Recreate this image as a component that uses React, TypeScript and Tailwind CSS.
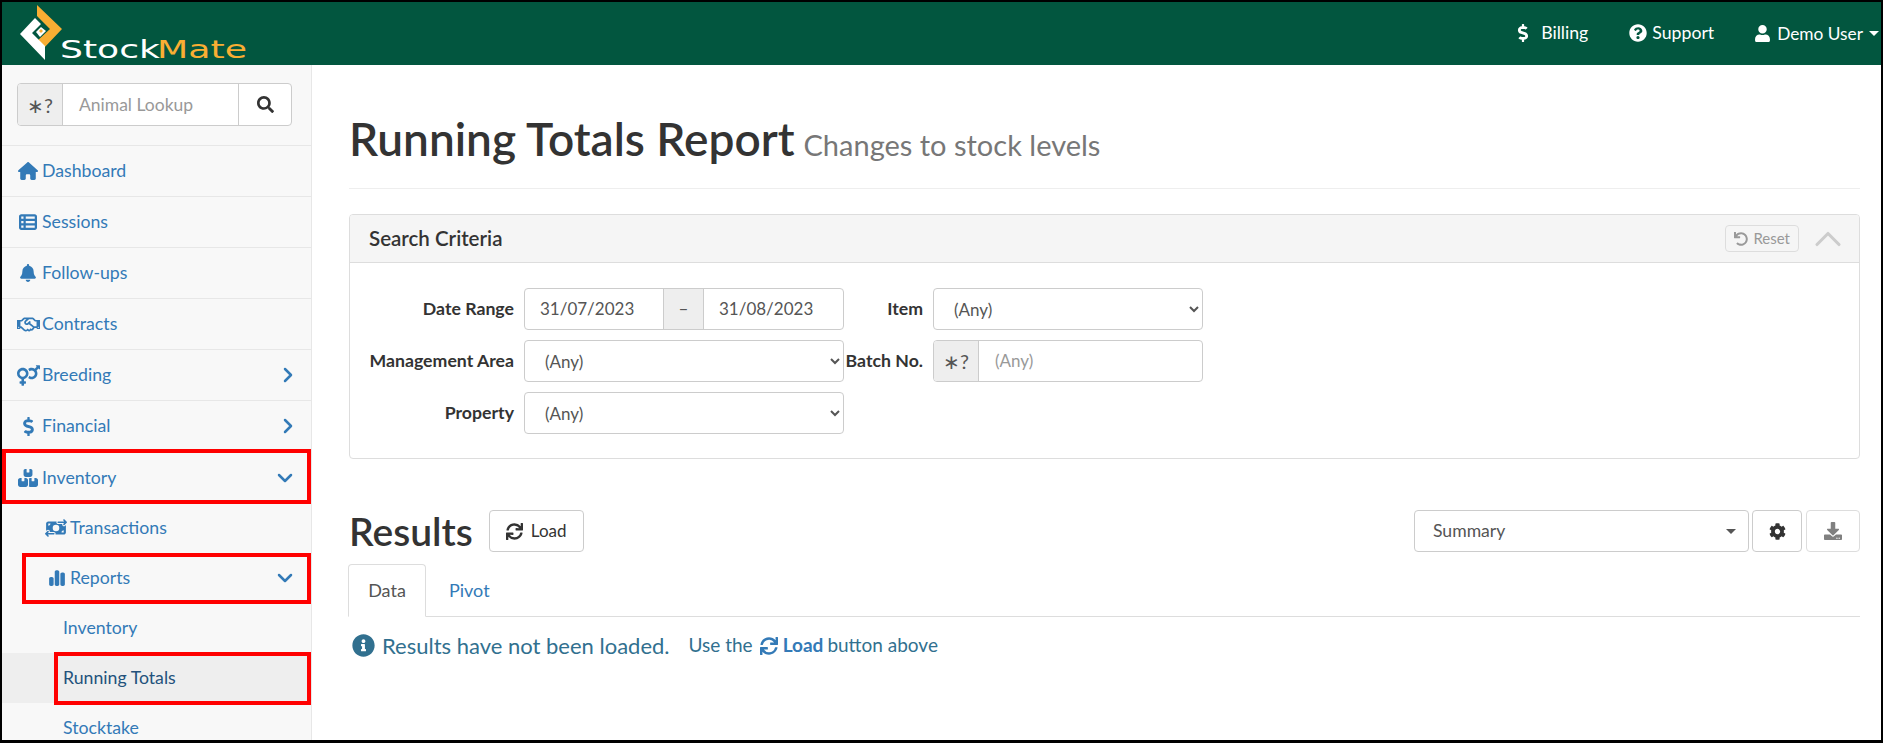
import { ReactNode } from 'react'
import {
  FaBell, FaRegHandshake, FaVenusMars, FaDollarSign, FaSearch,
  FaQuestionCircle, FaUser, FaUndo, FaSync, FaCog, FaDownload, FaInfoCircle,
} from 'react-icons/fa'
import { FaHouse, FaTableList, FaBoxesStacked, FaMoneyBillTransfer, FaChartSimple } from 'react-icons/fa6'
import { ChevronRight, ChevronDown, ChevronUp } from 'lucide-react'

const font = { fontFamily: 'Lato, "Open Sans", sans-serif' }

function Logo() {
  return (
    <svg width="250" height="63" viewBox="0 0 250 63" className="shrink-0">
      <polygon points="35,3 60,27 41,47 34,40 48,27 35,14" fill="#f9ae33" />
      <polygon points="18,32 33,16 39,22 30,31 43,44 43,58" fill="#ffffff" />
      <polygon points="34,30 39,25 44,29 38,35" fill="#ffffff" />
      <polygon points="37,29 39,27 41,29 39,31" fill="#f9ae33" />
      <text x="58" y="56" textLength="100" lengthAdjust="spacingAndGlyphs" fontFamily="DejaVu Sans" fontSize="25" fill="#ffffff">Stock</text>
      <text x="155" y="56" textLength="90" lengthAdjust="spacingAndGlyphs" fontFamily="DejaVu Sans" fontSize="25" fill="#f9ae33">Mate</text>
    </svg>
  )
}

function Addon({ className }: { className: string }) {
  return (
    <div className={`flex items-center justify-center bg-[#eeeeee] text-[#555555] text-[20px] ${className}`}>
      ∗?
    </div>
  )
}

function NavRow({ icon, label, right }: { icon: ReactNode; label: string; right?: ReactNode }) {
  return (
    <div className="flex items-center h-[51px] border-b border-[#e7e7e7] pl-[15px] pr-[11px] text-[#337ab7]">
      <span className="w-[26px] flex justify-center shrink-0 -ml-[2px] mr-[1px]">{icon}</span>
      <span className="flex-1">{label}</span>
      {right}
    </div>
  )
}

function RedBox({ className }: { className: string }) {
  return <div className={`absolute border-[4px] border-[#ff0000] ${className}`} />
}

function Sidebar() {
  return (
    <aside className="w-[310px] shrink-0 bg-[#f8f8f8] border-r border-[#e7e7e7] text-[17.7px]">
      <div className="h-[81px] border-b border-[#e7e7e7] pl-[15px] pt-[18px]">
        <div className="flex w-[275px] h-[43px] rounded border border-[#cccccc] overflow-hidden bg-white">
          <Addon className="w-[45px] border-r border-[#cccccc]" />
          <div className="flex items-center flex-1 pl-[16px] pt-[1px] text-[#999999] text-[17.5px]">Animal Lookup</div>
          <div className="flex items-center justify-center w-[53px] border-l border-[#cccccc] text-[#333333]">
            <FaSearch size={17} />
          </div>
        </div>
      </div>
      <NavRow icon={<FaHouse size={20} />} label="Dashboard" />
      <NavRow icon={<FaTableList size={18} />} label="Sessions" />
      <NavRow icon={<FaBell size={18} />} label="Follow-ups" />
      <NavRow icon={<FaRegHandshake size={23} />} label="Contracts" />
      <NavRow icon={<FaVenusMars size={23} />} label="Breeding" right={<ChevronRight size={24} strokeWidth={2.5} />} />
      <NavRow icon={<FaDollarSign size={19} />} label="Financial" right={<ChevronRight size={24} strokeWidth={2.5} />} />
      <div className="relative">
        <div className="flex items-center h-[51px] pl-[15px] pr-[14px] pt-[1px] text-[#337ab7]">
          <span className="w-[26px] flex justify-center shrink-0 -ml-[2px] mr-[1px]"><FaBoxesStacked size={20} /></span>
          <span className="flex-1">Inventory</span>
          <ChevronDown size={24} strokeWidth={2.5} />
        </div>
        <RedBox className="top-[-3px] bottom-[-1px] left-0 right-0" />
      </div>
      <div className="flex items-center h-[50px] pl-[43px] text-[#337ab7]">
        <FaMoneyBillTransfer size={22} className="mr-[3px]" />
        <span>Transactions</span>
      </div>
      <div className="relative flex items-center h-[50px] pl-[46px] pr-[14px] text-[#337ab7]">
        <FaChartSimple size={18} className="mr-[4px]" />
        <span className="flex-1">Reports</span>
        <ChevronDown size={24} strokeWidth={2.5} />
        <RedBox className="top-0 bottom-[-1px] left-[20px] right-0" />
      </div>
      <div className="flex items-center h-[50px] pl-[61px] text-[#337ab7]">Inventory</div>
      <div className="relative flex items-center h-[50px] pl-[61px] bg-[#eeeeee] text-[#23527c]">
        Running Totals
        <RedBox className="top-[-1px] bottom-[-2px] left-[52px] right-0" />
      </div>
      <div className="flex items-center h-[50px] pl-[61px] text-[#337ab7]">Stocktake</div>
    </aside>
  )
}

function Field({ label, children }: { label: string; children: ReactNode }) {
  return (
    <>
      <label className="font-bold text-[#333333] text-[17.7px] text-right whitespace-nowrap self-center pr-[10px]">{label}</label>
      {children}
    </>
  )
}

function Select({ className = '' }: { className?: string }) {
  return (
    <select className={`w-full h-[42px] rounded border border-[#cccccc] bg-white pl-[16px] pr-[10px] text-[#555555] text-[17px] ${className}`}>
      <option>(Any)</option>
    </select>
  )
}

function SearchPanel() {
  return (
    <section className="border border-[#dddddd] rounded overflow-hidden mt-[25px]">
      <div className="flex items-center h-[48px] bg-[#f5f5f5] border-b border-[#dddddd] pl-[19px] pr-[19px]">
        <h3 className="flex-1 text-[20.5px] font-semibold text-[#333333]">Search Criteria</h3>
        <div className="flex items-center gap-[5px] h-[27px] px-[8px] border border-[#dddddd] rounded text-[#999999] text-[15px]">
          <FaUndo size={14} /> Reset
        </div>
        <ChevronUp size={44} strokeWidth={1.7} className="text-[#cccccc] ml-[7px] -mr-[10px]" />
      </div>
      <div className="grid grid-cols-[174px_320px_89px_270px] gap-y-[10px] pt-[25px] pb-[24px]">
        <Field label="Date Range">
          <div className="flex h-[42px] rounded border border-[#cccccc] overflow-hidden text-[#555555] text-[17px]">
            <div className="flex items-center w-[138px] pl-[15px]">31/07/2023</div>
            <div className="flex items-center justify-center w-[41px] bg-[#eeeeee] border-x border-[#cccccc]">–</div>
            <div className="flex items-center flex-1 pl-[15px]">31/08/2023</div>
          </div>
        </Field>
        <Field label="Item"><Select /></Field>
        <Field label="Management Area"><Select /></Field>
        <Field label="Batch No.">
          <div className="flex h-[42px] rounded border border-[#cccccc] overflow-hidden">
            <Addon className="w-[45px] border-r border-[#cccccc]" />
            <div className="flex items-center flex-1 pl-[16px] text-[#999999] text-[17px]">(Any)</div>
          </div>
        </Field>
        <Field label="Property"><Select /></Field>
      </div>
    </section>
  )
}

function ResultsSection() {
  return (
    <section className="mt-[51px]">
      <div className="flex items-center h-[42px]">
        <h2 className="text-[39px] font-semibold text-[#333333] leading-none mr-[16px]">Results</h2>
        <button className="flex items-center gap-[8px] h-[42px] px-[16px] border border-[#cccccc] rounded text-[#333333] text-[17px]">
          <FaSync size={17} /> Load
        </button>
        <div className="flex-1" />
        <div className="flex items-center w-[335px] h-[42px] pl-[18px] pr-[12px] border border-[#cccccc] rounded text-[#555555] text-[17.6px]">
          <span className="flex-1">Summary</span>
          <span className="w-0 h-0 border-x-[5px] border-t-[5px] border-x-transparent border-t-[#555555]" />
        </div>
        <button className="flex items-center justify-center w-[50px] h-[42px] ml-[3px] border border-[#cccccc] rounded text-[#333333]">
          <FaCog size={17} />
        </button>
        <button className="flex items-center justify-center w-[54px] h-[42px] ml-[4px] border border-[#dddddd] rounded text-[#808080]">
          <FaDownload size={18} />
        </button>
      </div>
      <div className="flex h-[53px] mt-[12px] border-b border-[#dddddd] text-[18px]">
        <div className="flex items-center justify-center w-[78px] -ml-px border border-[#dddddd] border-b-white rounded-t h-[53px] bg-white text-[#555555]">Data</div>
        <div className="flex items-center pl-[23px] text-[#337ab7]">Pivot</div>
      </div>
      <div className="flex items-center mt-[12px] text-[#31708f]">
        <FaInfoCircle size={23} className="ml-[3px] mr-[7px]" />
        <span className="text-[22px] mr-[19px]">Results have not been loaded.</span>
        <span className="text-[19px]">Use the</span>
        <FaSync size={18} className="text-[#337ab7] ml-[7px] mr-[5px]" />
        <span className="text-[19px] font-bold text-[#337ab7]">Load</span>
        <span className="text-[19px] ml-[4px] text-[#31708f]">button above</span>
      </div>
    </section>
  )
}

export default function App() {
  return (
    <div style={font} className="w-[1883px] h-[743px] border-2 border-b-[3px] border-black overflow-hidden flex flex-col bg-white">
      <header className="flex items-center h-[63px] bg-[#02563f] text-white text-[17.7px] shrink-0">
        <Logo />
        <div className="flex-1" />
        <div className="flex items-center gap-[9px]"><FaDollarSign size={18} /> Billing</div>
        <div className="flex items-center gap-[5px] ml-[41px]"><FaQuestionCircle size={18} /> Support</div>
        <div className="flex items-center gap-[6px] ml-[40px] mr-[2px] text-[17.3px]">
          <FaUser size={17} /> Demo User
          <span className="w-0 h-0 border-x-[5px] border-t-[5px] border-x-transparent border-t-white" />
        </div>
      </header>
      <div className="flex flex-1 min-h-0">
        <Sidebar />
        <main className="flex-1 pl-[37px] pr-[21px]">
          <div className="h-[124px] border-b border-[#eeeeee] flex items-baseline pt-[51px]">
            <h1 className="text-[46px] leading-none font-semibold text-[#333333]">Running Totals Report</h1>
            <small className="text-[29px] text-[#777777] ml-[9px]">Changes to stock levels</small>
          </div>
          <SearchPanel />
          <ResultsSection />
        </main>
      </div>
    </div>
  )
}
